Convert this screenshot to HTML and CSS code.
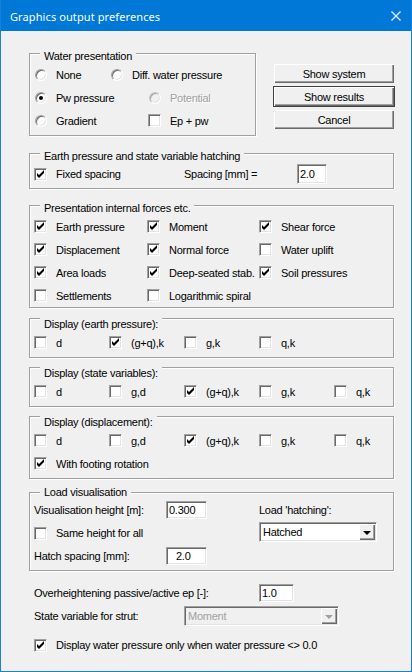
FILE: index.html
```html
<!DOCTYPE html>
<html lang="en">
<head>
    <meta charset="UTF-8">
    <title>Graphics output preferences</title>
    <link rel="stylesheet" href="styles.css">
</head>
<body>
<div class="window">
    <div class="titlebar">
        <span class="title">Graphics output preferences</span>
        <svg class="close" width="10" height="10" viewBox="0 0 10 10"><path d="M0.5 0.5L9.5 9.5M9.5 0.5L0.5 9.5" stroke="#fff" stroke-width="1.1"/></svg>
    </div>

    <div class="content">
        <div class="top">
            <div class="group water">
                <div class="legend">Water presentation</div>
                <div class="row">
                    <label class="opt w76"><span class="radio"></span><span class="txt">None</span></label>
                    <label class="opt"><span class="radio"></span><span class="txt">Diff. water pressure</span></label>
                </div>
                <div class="row">
                    <label class="opt w114"><span class="radio on"></span><span class="txt">Pw pressure</span></label>
                    <label class="opt off"><span class="radio"></span><span class="txt">Potential</span></label>
                </div>
                <div class="row">
                    <label class="opt w114"><span class="radio"></span><span class="txt">Gradient</span></label>
                    <label class="opt"><span class="check"></span><span class="txt">Ep + pw</span></label>
                </div>
            </div>
            <div class="buttons">
                <button class="btn">Show system</button>
                <button class="btn default">Show results</button>
                <button class="btn">Cancel</button>
            </div>
        </div>

        <div class="group hatching">
            <div class="legend">Earth pressure and state variable hatching</div>
            <div class="row r22">
                <label class="opt w150"><span class="check on"></span><span class="txt">Fixed spacing</span></label>
                <span class="lbl w113">Spacing [mm] =</span>
                <span class="field spacing">2.0</span>
            </div>
        </div>

        <div class="group forces">
            <div class="legend">Presentation internal forces etc.</div>
            <div class="row">
                <label class="opt w113"><span class="check on"></span><span class="txt">Earth pressure</span></label>
                <label class="opt w112"><span class="check on"></span><span class="txt">Moment</span></label>
                <label class="opt"><span class="check on"></span><span class="txt">Shear force</span></label>
            </div>
            <div class="row">
                <label class="opt w113"><span class="check on"></span><span class="txt">Displacement</span></label>
                <label class="opt w112"><span class="check on"></span><span class="txt">Normal force</span></label>
                <label class="opt"><span class="check"></span><span class="txt">Water uplift</span></label>
            </div>
            <div class="row">
                <label class="opt w113"><span class="check on"></span><span class="txt">Area loads</span></label>
                <label class="opt w112"><span class="check on"></span><span class="txt">Deep-seated stab.</span></label>
                <label class="opt"><span class="check on"></span><span class="txt">Soil pressures</span></label>
            </div>
            <div class="row">
                <label class="opt w113"><span class="check"></span><span class="txt">Settlements</span></label>
                <label class="opt w112"><span class="check"></span><span class="txt">Logarithmic spiral</span></label>
            </div>
        </div>

        <div class="group display first">
            <div class="legend">Display (earth pressure):</div>
            <div class="row">
                <label class="opt w75"><span class="check"></span><span class="txt">d</span></label>
                <label class="opt w75"><span class="check on"></span><span class="txt">(g+q),k</span></label>
                <label class="opt w75"><span class="check"></span><span class="txt">g,k</span></label>
                <label class="opt"><span class="check"></span><span class="txt">q,k</span></label>
            </div>
        </div>

        <div class="group display">
            <div class="legend">Display (state variables):</div>
            <div class="row">
                <label class="opt w75"><span class="check"></span><span class="txt">d</span></label>
                <label class="opt w75"><span class="check"></span><span class="txt">g,d</span></label>
                <label class="opt w75"><span class="check on"></span><span class="txt">(g+q),k</span></label>
                <label class="opt w75"><span class="check"></span><span class="txt">g,k</span></label>
                <label class="opt"><span class="check"></span><span class="txt">q,k</span></label>
            </div>
        </div>

        <div class="group display">
            <div class="legend">Display (displacement):</div>
            <div class="row">
                <label class="opt w75"><span class="check"></span><span class="txt">d</span></label>
                <label class="opt w75"><span class="check"></span><span class="txt">g,d</span></label>
                <label class="opt w75"><span class="check on"></span><span class="txt">(g+q),k</span></label>
                <label class="opt w75"><span class="check"></span><span class="txt">g,k</span></label>
                <label class="opt"><span class="check"></span><span class="txt">q,k</span></label>
            </div>
            <div class="row">
                <label class="opt"><span class="check on"></span><span class="txt">With footing rotation</span></label>
            </div>
        </div>

        <div class="group loads">
            <div class="legend">Load visualisation</div>
            <div class="load-cols">
                <div class="load-left">
                    <div class="row r22">
                        <span class="lbl w132">Visualisation height [m]:</span>
                        <span class="field small">0.300</span>
                    </div>
                    <div class="row r24">
                        <label class="opt"><span class="check"></span><span class="txt">Same height for all</span></label>
                    </div>
                    <div class="row r21">
                        <span class="lbl w132">Hatch spacing [mm]:</span>
                        <span class="field small pad">2.0</span>
                    </div>
                </div>
                <div class="load-right">
                    <div class="row r22"><span class="lbl">Load 'hatching':</span></div>
                    <div class="select hatch">
                        <span class="sel-text">Hatched</span>
                        <span class="drop"><span class="arrow"></span></span>
                    </div>
                </div>
            </div>
        </div>

        <div class="bottom">
            <div class="row r20 over">
                <span class="lbl w225">Overheightening passive/active ep [-]:</span>
                <span class="field factor">1.0</span>
            </div>
            <div class="row r20 strut">
                <span class="lbl w150">State variable for strut:</span>
                <div class="select disabled">
                    <span class="sel-text">Moment</span>
                    <span class="drop"><span class="arrow"></span></span>
                </div>
            </div>
            <div class="row r20 only">
                <label class="opt"><span class="check on"></span><span class="txt">Display water pressure only when water pressure &lt;&gt; 0.0</span></label>
            </div>
        </div>
    </div>
</div>
</body>
</html>
```

FILE: styles.css
```css
body {
    margin: 0;
    background-color: #f0f0f0;
    font-family: "Liberation Sans", Arial, sans-serif;
    font-size: 11px;
    letter-spacing: -0.25px;
    color: #000;
}

.window {
    width: 412px;
    height: 672px;
    box-sizing: border-box;
    border: 1px solid #1a7fd6;
    border-top: none;
    background-color: #f0f0f0;
    overflow: hidden;
}

.titlebar {
    height: 31px;
    margin: 0 -1px;
    background-color: #0078d7;
    display: flex;
    align-items: center;
    justify-content: space-between;
    padding: 0 11px 0 10px;
}

.title {
    font-family: "Noto Sans", "Open Sans", sans-serif;
    font-size: 11px;
    letter-spacing: 0.1px;
    color: #fff;
    margin-top: 1px;
}

.close {
    display: block;
}

.content {
    padding: 22px 17px 0 28px;
}

/* group boxes with an etched frame */
.group {
    border: 1px solid #a0a0a0;
    box-shadow: 1px 1px 0 #fff, inset 1px 1px 0 #fff;
    padding: 3px 0 3px 4px;
}

.legend {
    width: fit-content;
    height: 14px;
    line-height: 14px;
    margin: -8px 0 0 6px;
    padding: 0 4px 0 4px;
    background-color: #f0f0f0;
}

.row {
    display: flex;
    align-items: center;
    height: 23px;
}

.r20 { height: 20px; }
.r21 { height: 21px; }
.r22 { height: 22px; }
.r24 { height: 24px; }

.opt {
    display: flex;
    align-items: center;
    white-space: nowrap;
    flex-shrink: 0;
}

.txt {
    margin-left: 9px;
}

.lbl {
    white-space: nowrap;
    flex-shrink: 0;
}

.w75 { width: 75px; }
.w76 { width: 76px; }
.w112 { width: 112px; }
.w113 { width: 113px; }
.w114 { width: 114px; }
.w132 { width: 132px; }
.w150 { width: 150px; }
.w225 { width: 225px; }

.opt.off .txt {
    color: #a0a0a0;
    text-shadow: 1px 1px 0 #fff;
}

.check {
    width: 13px;
    height: 13px;
    box-sizing: border-box;
    background-color: #fff;
    border: 1px solid;
    border-color: #a0a0a0 #fff #fff #a0a0a0;
    box-shadow: inset 1px 1px 0 #696969, inset -1px -1px 0 #e3e3e3;
    flex-shrink: 0;
}

.check.on {
    background: #fff url("data:image/svg+xml,%3Csvg xmlns='http://www.w3.org/2000/svg' width='11' height='11' viewBox='0 0 11 11'%3E%3Cpath d='M2 4v3l2 2 5-5V1L4 6z' fill='%23000'/%3E%3C/svg%3E") no-repeat 0 0;
}

.radio {
    width: 12px;
    height: 12px;
    margin: 0 0 0 1px;
    box-sizing: border-box;
    border-radius: 50%;
    background-color: #fff;
    border: 1px solid;
    border-color: #a0a0a0 #fff #fff #a0a0a0;
    box-shadow: inset 1px 1px 0 #696969, inset -1px -1px 0 #e3e3e3;
    display: flex;
    align-items: center;
    justify-content: center;
    flex-shrink: 0;
}

.radio + .txt {
    margin-left: 9px;
}

.opt.off .radio {
    background-color: #f0f0f0;
    border-color: #c8c8c8 #fff #fff #c8c8c8;
    box-shadow: inset 1px 1px 0 #a0a0a0, inset -1px -1px 0 #e3e3e3;
}

.radio.on::after {
    content: "";
    width: 4px;
    height: 4px;
    border-radius: 50%;
    background-color: #000;
}

/* top part: water presentation + buttons */
.top {
    display: flex;
    gap: 18px;
    align-items: flex-start;
}

.water {
    width: 227px;
    box-sizing: border-box;
}

.buttons {
    flex: 1;
    margin-top: 11px;
    display: flex;
    flex-direction: column;
    gap: 4px;
}

.btn {
    height: 19px;
    padding: 0;
    border: none;
    background-color: #f0f0f0;
    font-family: "Liberation Sans", Arial, sans-serif;
    font-size: 11px;
    letter-spacing: -0.25px;
    color: #000;
    box-shadow: inset 1px 1px 0 #fff, inset -1px -1px 0 #696969, inset -2px -2px 0 #a0a0a0;
}

.btn.default {
    box-shadow: 0 0 0 1px #404040, inset 1px 1px 0 #fff, inset -1px -1px 0 #696969, inset -2px -2px 0 #a0a0a0;
}

.hatching {
    margin-top: 17px;
    padding-bottom: 3px;
}

.forces {
    margin-top: 16px;
    padding-bottom: 0;
}

.display {
    margin-top: 9px;
    padding-top: 6px;
}

.display.first {
    margin-top: 10px;
}

/* sunken edit fields */
.field {
    box-sizing: border-box;
    background-color: #fff;
    border: 1px solid;
    border-color: #a0a0a0 #fff #fff #a0a0a0;
    box-shadow: inset 1px 1px 0 #696969, inset -1px -1px 0 #e3e3e3;
    padding: 0 0 0 2px;
    display: flex;
    align-items: center;
    white-space: nowrap;
    flex-shrink: 0;
}

.spacing {
    width: 30px;
    height: 20px;
}

.small {
    width: 41px;
    height: 18px;
}

.small.pad {
    padding-left: 9px;
}

.factor {
    width: 35px;
    height: 18px;
}

.loads {
    margin-top: 13px;
    padding-top: 0;
    padding-bottom: 4px;
}

.load-cols {
    display: flex;
}

.load-left {
    width: 225px;
}

.load-right {
    width: 118px;
}

.select {
    box-sizing: border-box;
    height: 20px;
    background-color: #fff;
    border: 1px solid;
    border-color: #a0a0a0 #fff #fff #a0a0a0;
    box-shadow: inset 1px 1px 0 #696969, inset -1px -1px 0 #e3e3e3;
    display: flex;
    align-items: center;
    padding: 1px 1px 1px 3px;
}

.hatch {
    width: 118px;
    margin-top: 1px;
}

.sel-text {
    flex: 1;
}

.drop {
    width: 16px;
    height: 16px;
    box-sizing: border-box;
    background-color: #f0f0f0;
    box-shadow: inset 1px 1px 0 #fff, inset -1px -1px 0 #696969, inset -2px -2px 0 #a0a0a0;
    display: flex;
    align-items: center;
    justify-content: center;
}

.arrow {
    width: 0;
    height: 0;
    border-left: 4px solid transparent;
    border-right: 4px solid transparent;
    border-top: 4px solid #000;
    margin-top: 1px;
}

.select.disabled {
    width: 155px;
    background-color: #f0f0f0;
    color: #a0a0a0;
}

.select.disabled .arrow {
    border-top-color: #a0a0a0;
}

.bottom {
    padding-left: 5px;
}

.over {
    margin-top: 12px;
}

.strut {
    margin-top: 3px;
}

.only {
    margin-top: 9px;
}
```
